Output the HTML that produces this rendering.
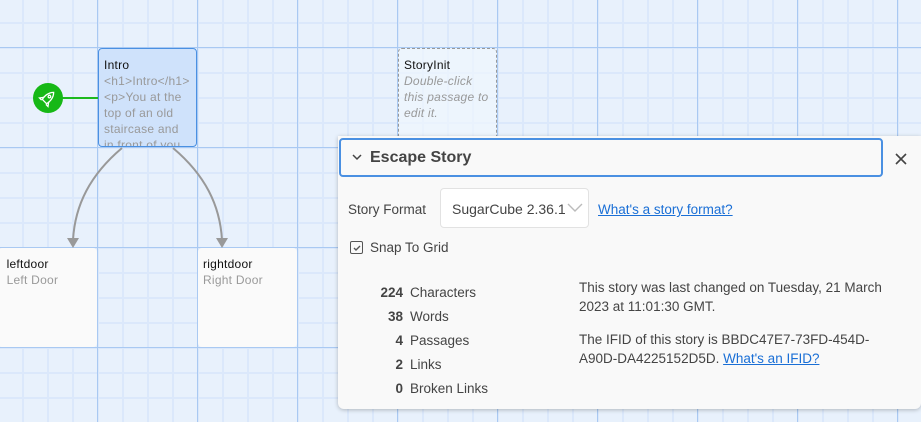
<!DOCTYPE html>
<html><head><meta charset="utf-8"><style>
*{box-sizing:border-box;margin:0;padding:0}
body{width:921px;height:422px;overflow:hidden;position:relative;font-family:"Liberation Sans",sans-serif;font-size:12px;
background-color:#e8f1fc;
background-image:
linear-gradient(to right,#a9c9f2 1px,transparent 1px),
linear-gradient(to bottom,#a9c9f2 1px,transparent 1px),
linear-gradient(to right,#dbe8fb 2px,transparent 2px),
linear-gradient(to bottom,#dbe8fb 2px,transparent 2px);
background-size:100px 100px,100px 100px,25px 25px,25px 25px;
background-position:97px 0,0 47px,22px 0,0 22px;}
.p{position:absolute;width:99px;height:99px;border-radius:4px;padding:8px 5px 0;overflow:hidden;line-height:16px;letter-spacing:.25px}
.p .t{color:#111;font-size:12px}
.p .x{color:#999;font-size:12px}
.dlg{position:absolute;left:338px;top:136px;width:583px;height:273px;background:#f9f9f9;border-radius:0 0 6px 6px;box-shadow:0 1px 4px rgba(0,0,0,.25);color:#444;font-size:13px}
a{color:#1a6fd6;text-decoration:underline}
.r{position:absolute}
</style></head><body>
<svg width="921" height="422" style="position:absolute;left:0;top:0">
<line x1="48" y1="98" x2="98" y2="98" stroke="#1db91d" stroke-width="2"/>
<circle cx="48" cy="98" r="15" fill="#16b816"/>
<g transform="translate(48,98) rotate(45)" fill="none" stroke="#fff" stroke-width="1.3">
<path d="M0,-8 C4,-4 4,2 3,5 L-3,5 C-4,2 -4,-4 0,-8Z"/><path d="M-3,2 L-6,6 L-3,6 M3,2 L6,6 L3,6"/><circle cx="0" cy="-2" r="1.3"/>
</g>
<path d="M122,148 C90,175 75,205 73,240" fill="none" stroke="#999" stroke-width="2"/>
<path d="M67,238 L79,238 L73,248Z" fill="#999"/>
<path d="M173,148 C205,175 220,205 222,240" fill="none" stroke="#999" stroke-width="2"/>
<path d="M216,238 L228,238 L222,248Z" fill="#999"/>
</svg>
<div class="p" style="left:98px;top:48px;background:#cfe2fb;border:1px solid #4a90e2"><div class="t">Intro</div><div class="x">&lt;h1&gt;Intro&lt;/h1&gt;<br>&lt;p&gt;You at the top of an old staircase and in front of you</div></div>
<div class="p" style="left:398px;top:48px;height:100px;background:rgba(240,246,253,.7);border:1px dashed #999"><div class="t">StoryInit</div><div class="x" style="font-style:italic">Double-click this passage to edit it.</div></div>
<div class="p" style="left:-2px;top:248px;background:#fafafa"><div class="t">&nbsp;leftdoor</div><div class="x">&nbsp;Left Door</div></div>
<div class="p" style="left:198px;top:248px;background:#fafafa"><div class="t">rightdoor</div><div class="x">Right Door</div></div>
<div class="dlg">
<div class="r" style="left:1px;top:2px;width:544px;height:39px;border:2px solid #4a90e2;border-radius:4px;background:#f9f9f9"></div>
<svg class="r" style="left:13px;top:17px" width="12" height="10"><path d="M2,2 L6,6 L10,2" fill="none" stroke="#444" stroke-width="1.5"/></svg>
<div class="r" style="left:32px;top:13px;font-size:16px;font-weight:bold;color:#444">Escape Story</div>
<svg class="r" style="left:557px;top:17px" width="12" height="12"><path d="M1,1 L11,11 M11,1 L1,11" stroke="#444" stroke-width="1.6"/></svg>
<div class="r" style="left:10px;top:66px;font-size:13.5px">Story Format</div>
<div class="r" style="left:102px;top:52px;width:149px;height:40px;border:1px solid #e2e2e2;border-radius:4px;background:#fff;padding:12px 0 0 11px;font-size:14px;white-space:nowrap;overflow:hidden">SugarCube 2.36.1</div>
<svg class="r" style="left:229px;top:67px" width="16" height="10"><path d="M1,1 L8,8 L15,1" fill="none" stroke="#bbb" stroke-width="1.4"/></svg>
<a class="r" style="left:260px;top:66px;font-size:13.5px">What's a story format?</a>
<div class="r" style="left:12px;top:105px;width:13px;height:13px;border:1.5px solid #555;border-radius:2px"></div>
<svg class="r" style="left:14px;top:107px" width="10" height="10"><path d="M2,5 L4,7 L8,3" fill="none" stroke="#555" stroke-width="1.4"/></svg>
<div class="r" style="left:32px;top:104px;font-size:13.5px">Snap To Grid</div>
<div class="r" style="left:20px;top:145px;line-height:24px;text-align:right;width:45px;font-weight:bold;font-size:13.5px">224<br>38<br>4<br>2<br>0</div>
<div class="r" style="left:72px;top:145px;line-height:24px;font-size:13.5px">Characters<br>Words<br>Passages<br>Links<br>Broken Links</div>
<div class="r" style="left:241px;top:142px;width:310px;line-height:19px;font-size:13.5px">This story was last changed on Tuesday, 21 March 2023 at 11:01:30 GMT.</div>
<div class="r" style="left:241px;top:194px;width:305px;line-height:19px;font-size:13.5px">The IFID of this story is BBDC47E7-73FD-454D-<br>A90D-DA4225152D5D. <a>What's an IFID?</a></div>
</div>
</body></html>
